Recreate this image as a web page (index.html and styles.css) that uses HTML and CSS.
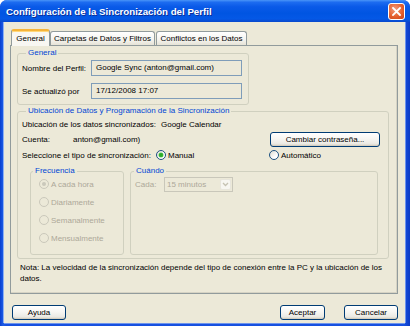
FILE: index.html
```html
<!DOCTYPE html>
<html lang="es">
<head>
<meta charset="utf-8">
<title>Configuración de la Sincronización del Perfil</title>
<link rel="stylesheet" href="styles.css">
</head>
<body>
<div class="window">
  <div class="titlebar">
    <span class="title">Configuración de la Sincronización del Perfil</span>
    <span class="close"><svg width="9" height="9" viewBox="0 0 9 9"><path d="M1 1 L8 8 M8 1 L1 8" stroke="#fff" stroke-width="1.8" stroke-linecap="square"/></svg></span>
  </div>
  <div class="client">
    <div class="tabs">
      <div class="tab active t1">General</div>
      <div class="tab t2">Carpetas de Datos y Filtros</div>
      <div class="tab t3">Conflictos en los Datos</div>
    </div>
    <div class="panel">
      <fieldset class="group g-general">
        <legend>General</legend>
        <div class="frow"><span class="flabel">Nombre del Perfil:</span><span class="field">Google Sync (anton@gmail.com)</span></div>
        <div class="frow"><span class="flabel">Se actualizó por</span><span class="field">17/12/2008 17:07</span></div>
      </fieldset>
      <fieldset class="group g-sync">
        <legend>Ubicación de Datos y Programación de la Sincronización</legend>
        <div class="row r1"><span class="l1">Ubicación de los datos sincronizados:</span><span>Google Calendar</span></div>
        <div class="row r2"><span class="l2">Cuenta:</span><span>anton@gmail.com)</span><button class="btn btn-pass">Cambiar contraseña...</button></div>
        <div class="row r3"><span class="l3">Seleccione el tipo de sincronización:</span><span class="radio"><i class="dot on"></i>Manual</span><span class="radio auto"><i class="dot"></i>Automático</span></div>
        <div class="subgroups">
          <fieldset class="group g-freq">
            <legend>Frecuencia</legend>
            <div class="radio dis"><i class="dot on"></i>A cada hora</div>
            <div class="radio dis"><i class="dot"></i>Diariamente</div>
            <div class="radio dis"><i class="dot"></i>Semanalmente</div>
            <div class="radio dis"><i class="dot"></i>Mensualmente</div>
          </fieldset>
          <fieldset class="group g-when">
            <legend>Cuándo</legend>
            <div class="row when"><span class="cada">Cada:</span><span class="select"><span class="sel-text">15 minutos</span><span class="sel-btn"><svg width="7" height="5" viewBox="0 0 7 5"><path d="M1 1 L3.5 3.5 L6 1" fill="none" stroke="#C5C2B2" stroke-width="1.3"/></svg></span></span></div>
          </fieldset>
        </div>
      </fieldset>
      <p class="note">Nota: La velocidad de la sincronización depende del tipo de conexión entre la PC y la ubicación de los<br>datos.</p>
    </div>
    <div class="footer">
      <button class="btn b-help">Ayuda</button>
      <button class="btn b-ok">Aceptar</button>
      <button class="btn b-cancel">Cancelar</button>
    </div>
  </div>
</div>
</body>
</html>
```

FILE: styles.css
```css
* { box-sizing: border-box; }
html, body { margin: 0; padding: 0; background: #ffffff; }
body {
  font-family: "Liberation Sans", Arial, sans-serif;
  font-size: 8px;
  color: #000;
}

.window {
  width: 410px;
  height: 326px;
  display: flex;
  flex-direction: column;
  background: linear-gradient(90deg, #0A3FCE 0, #1C5BE6 3px, #1650E0 6px, #1650E0 calc(100% - 6px), #0B3AC4 100%);
  border-radius: 7px 7px 0 0;
  overflow: hidden;
}

.titlebar {
  height: 22px;
  flex: none;
  display: flex;
  align-items: center;
  padding: 0 5px 0 6px;
  background: linear-gradient(#4A95F8 0%, #1D6CF0 10%, #0A5AE8 30%, #0055E2 60%, #0458E6 85%, #0A49CC 100%);
}
.title {
  flex: 1;
  color: #fff;
  font-weight: bold;
  font-size: 9.7px;
  text-shadow: 1px 1px 0 #0B2F9A;
  white-space: nowrap;
}
.close {
  width: 17px;
  height: 17px;
  border: 1px solid #fff;
  border-radius: 3px;
  background: radial-gradient(circle at 40% 35%, #F29C7E 0%, #E5612F 55%, #C6411A 100%);
  display: flex;
  align-items: center;
  justify-content: center;
}

.client {
  flex: 1;
  margin: 0 5px 3px 4px;
  background: #ECE9D8;
  display: flex;
  flex-direction: column;
  box-shadow: -1px 0 0 #8FB0F2, 1px 0 0 #6C93EC, 0 1px 0 #6C93EC;
}

/* Tabs */
.tabs {
  flex: none;
  height: 16px;
  margin: 7px 0 0 7px;
  display: flex;
  align-items: flex-end;
  position: relative;
  z-index: 1;
}
.tab {
  height: 14px;
  border: 1px solid #919B9C;
  border-bottom: none;
  border-radius: 3px 3px 0 0;
  background: linear-gradient(#FFFFFF, #F4F3EE 60%, #E6E3D6);
  text-align: center;
  line-height: 13px;
  white-space: nowrap;
}
.tab.active {
  height: 17px;
  margin-bottom: -1px;
  background: #F8F7F2;
  border-top: 2px solid #F5B43A;
  line-height: 15px;
  box-shadow: inset 0 1px 0 #FFD77A;
}
.t1 { width: 39px; }
.t2 { width: 105px; }
.t3 { width: 91px; margin-left: 1px; }

/* Panel */
.panel {
  flex: 1;
  margin: 0 7px 0 6px;
  border: 1px solid #919B9C;
  box-shadow: inset -1px -1px 0 #D6D3C4;
  padding: 2px 0 0 6px;
  display: flex;
  flex-direction: column;
}

.group {
  margin: 0;
  padding: 0;
  min-width: 0;
  border: 1px solid #D0D0BF;
  border-radius: 3px;
}
.group legend {
  padding: 0 2px;
  margin-left: 4px;
  line-height: 10px;
  color: #0046D5;
}

.g-general {
  width: 232px;
  height: 57px;
  padding: 2px 6px 0 4px;
  display: flex;
  flex-direction: column;
  gap: 7px;
}
.frow {
  display: flex;
  align-items: center;
  height: 16px;
}
.flabel { flex: 1; white-space: nowrap; }
.field {
  width: 151px;
  height: 16px;
  border: 1px solid #7F9DB9;
  padding-left: 4px;
  line-height: 14px;
  white-space: nowrap;
  overflow: hidden;
}

.g-sync {
  width: 372px;
  margin-top: 1px;
  padding: 1px 8px 3px 4px;
}
.row {
  display: flex;
  align-items: center;
  white-space: nowrap;
}
.r1 { height: 14px; }
.r2 { height: 16px; }
.r3 { height: 16px; }
.l1 { width: 139px; }
.l2 { width: 51px; }
.l3 { width: 134px; }

.btn {
  font-family: inherit;
  font-size: 8px;
  color: #000;
  height: 15px;
  padding: 0;
  border: 1px solid #003C74;
  border-radius: 3px;
  background: linear-gradient(#FFFFFF 0%, #F7F6F2 45%, #ECEBE5 80%, #D8D3C6 100%);
  box-shadow: inset 0 -1px 0 #D6CFC0;
}
.btn-pass { width: 110px; margin-left: auto; margin-top: 1px; }

.radio {
  display: flex;
  align-items: center;
  white-space: nowrap;
}
.dot {
  width: 10px;
  height: 10px;
  flex: none;
  border-radius: 50%;
  border: 1px solid #1C5180;
  background: linear-gradient(135deg, #DCDCD2, #FFFFFF 70%);
  margin-right: 2px;
  display: flex;
  align-items: center;
  justify-content: center;
}
.dot.on::after {
  content: "";
  width: 4px;
  height: 4px;
  border-radius: 50%;
  background: #2CAC2C;
  box-shadow: 0 0 0 0.5px #5CD35C;
}
.auto { margin-left: auto; width: 111px; }

.subgroups {
  display: flex;
  gap: 6px;
  margin: 3px 2px 0 8px;
}
.g-freq {
  width: 94px;
  height: 89px;
}
.g-freq legend { margin-left: 2px; }
.g-when {
  flex: 1;
  height: 89px;
  padding: 0 0 0 4px;
}
.g-when legend { margin-left: -1px; }

.dis {
  color: #ACA899;
  height: 18px;
  margin-left: 8px;
}
.g-freq .dis:first-of-type { margin-top: -1px; }
.dis .dot {
  border-color: #CAC8BB;
  background: transparent;
}
.dis .dot.on::after {
  background: #CAC8BB;
  box-shadow: none;
}

.when { height: 16px; margin-top: 0; color: #ACA899; }
.cada { width: 29px; }
.select {
  width: 69px;
  height: 15px;
  border: 1px solid #C9C7BA;
  display: flex;
  align-items: stretch;
  background: #ECE9D8;
}
.sel-text {
  flex: 1;
  padding-left: 2px;
  line-height: 13px;
  color: #ACA899;
}
.sel-btn {
  width: 11px;
  margin: 1px;
  border: 1px solid #E8E6DC;
  border-radius: 2px;
  background: #F7F6F1;
  display: flex;
  align-items: center;
  justify-content: center;
}

.note {
  margin: 3px 0 0 3px;
  line-height: 11px;
}

/* Footer */
.footer {
  flex: none;
  height: 29px;
  padding: 11px 7px 3px 8px;
  display: flex;
  align-items: flex-start;
}
.b-help { width: 54px; }
.b-ok { width: 45px; margin-left: auto; }
.b-cancel { width: 54px; margin-left: 19px; }
```
